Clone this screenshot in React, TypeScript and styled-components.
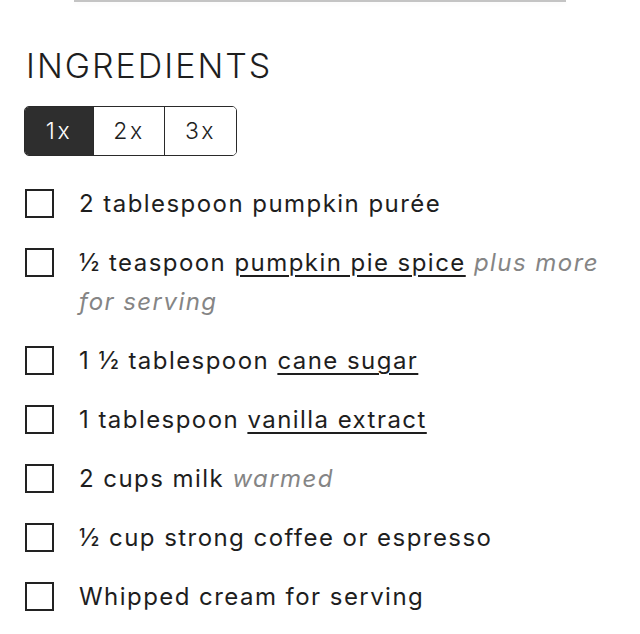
import React, { useState } from 'react';
import styled, { createGlobalStyle } from 'styled-components';

const GlobalStyle = createGlobalStyle`
  body {
    margin: 0;
    background: #fff;
    font-family: Inter, "Noto Sans", sans-serif;
    color: #1e1e1e;
  }
`;

const Page = styled.div`
  width: 640px;
  height: 634px;
  overflow: hidden;
`;

const CardEdge = styled.div`
  margin-left: 74px;
  width: 492px;
  height: 2px;
  background: #c4c4c4;
  box-shadow: 0 2px 4px rgba(0, 0, 0, 0.04);
`;

const Section = styled.section`
  padding: 0 24px;
`;

const Title = styled.h2`
  margin: 43px 0 0 2px;
  font-size: 34px;
  line-height: 42px;
  font-weight: 300;
  letter-spacing: 2px;
  text-transform: uppercase;
`;

const Scaler = styled.div`
  display: inline-flex;
  margin-top: 19px;
  border: 1.5px solid #2a2a2a;
  border-radius: 5px;
  overflow: hidden;
`;

const ScaleButton = styled.button<{ $active: boolean; $w: number }>`
  width: ${({ $w }) => $w}px;
  height: 48px;
  border: none;
  border-left: 1.5px solid #2a2a2a;
  background: ${({ $active }) => ($active ? '#2e2e2e' : '#fff')};
  color: ${({ $active }) => ($active ? '#fff' : '#1e1e1e')};
  font-family: Inter, sans-serif;
  font-size: 23px;
  font-weight: 300;
  letter-spacing: 2.5px;
  padding: 0;
  cursor: pointer;

  &:first-child {
    border-left: none;
  }
`;

const List = styled.ul`
  list-style: none;
  margin: 28px 0 0;
  padding: 0;
  display: flex;
  flex-direction: column;
  gap: 20px;
`;

const Item = styled.li`
  display: flex;
  align-items: flex-start;
  gap: 25px;
  font-size: 24px;
  line-height: 39px;
  letter-spacing: 1.45px;
`;

const Box = styled.span`
  flex: none;
  width: 25px;
  height: 25px;
  margin: 5px 0 0 1px;
  border: 2px solid #222;
`;

const Link = styled.a`
  color: #1e1e1e;
  text-decoration: underline;
  text-underline-offset: 4px;
  text-decoration-thickness: 1.5px;
`;

const Note = styled.em`
  color: #858585;
`;

const scales = [
  { label: '1x', w: 68 },
  { label: '2x', w: 71 },
  { label: '3x', w: 72 },
];

export default function App() {
  const [scale, setScale] = useState(0);
  return (
    <Page>
      <GlobalStyle />
      <CardEdge />
      <Section>
        <Title>Ingredients</Title>
        <Scaler>
          {scales.map((s, i) => (
            <ScaleButton key={s.label} $w={s.w} $active={scale === i} onClick={() => setScale(i)}>
              {s.label}
            </ScaleButton>
          ))}
        </Scaler>
        <List>
          <Item><Box />2 tablespoon pumpkin purée</Item>
          <Item>
            <Box />
            <span>½ teaspoon <Link>pumpkin pie spice</Link> <Note>plus more for serving</Note></span>
          </Item>
          <Item><Box /><span>1 ½ tablespoon <Link>cane sugar</Link></span></Item>
          <Item><Box /><span>1 tablespoon <Link>vanilla extract</Link></span></Item>
          <Item><Box /><span>2 cups milk <Note>warmed</Note></span></Item>
          <Item><Box />½ cup strong coffee or espresso</Item>
          <Item><Box />Whipped cream for serving</Item>
        </List>
      </Section>
    </Page>
  );
}
